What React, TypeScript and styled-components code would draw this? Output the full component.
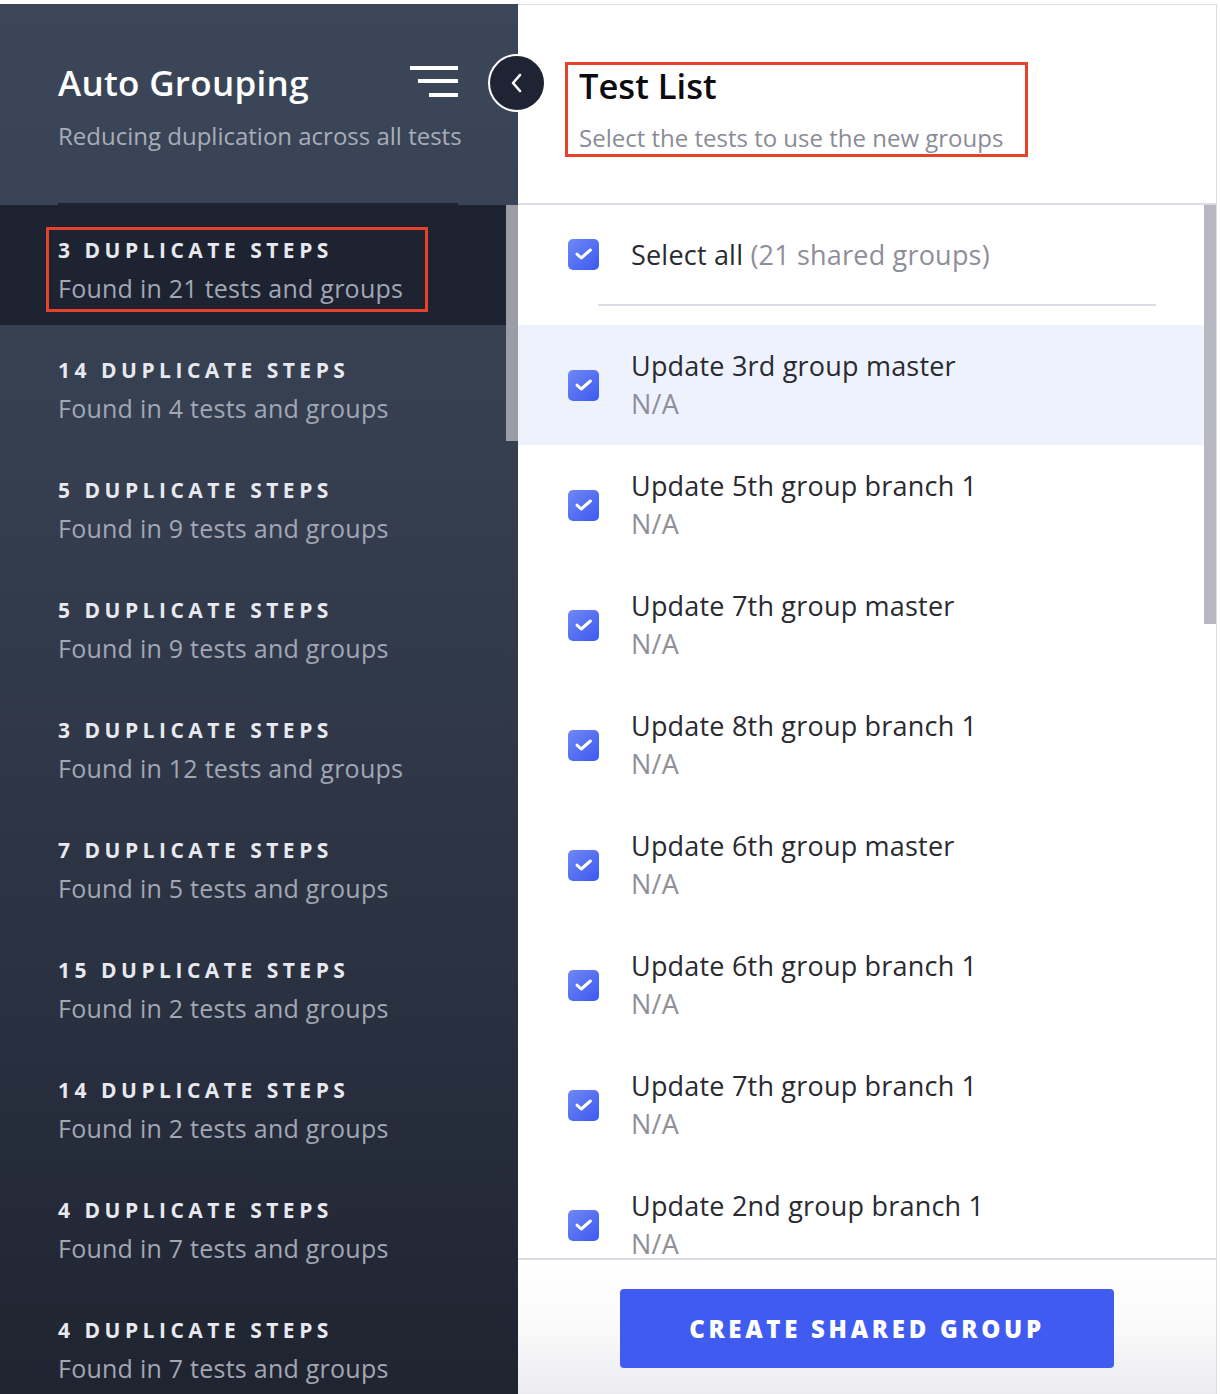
import React from 'react';
import styled, { createGlobalStyle } from 'styled-components';

const GlobalStyle = createGlobalStyle`
  html, body {
    margin: 0;
    padding: 0;
    background: #ffffff;
  }
  body {
    font-family: 'Open Sans', 'Noto Sans', 'Liberation Sans', sans-serif;
    -webkit-font-smoothing: antialiased;
  }
  * {
    box-sizing: border-box;
  }
`;

interface DuplicateGroup {
  steps: number;
  tests: number;
}

interface TestItem {
  name: string;
  detail: string;
}

const groups: DuplicateGroup[] = [
  { steps: 3, tests: 21 },
  { steps: 14, tests: 4 },
  { steps: 5, tests: 9 },
  { steps: 5, tests: 9 },
  { steps: 3, tests: 12 },
  { steps: 7, tests: 5 },
  { steps: 15, tests: 2 },
  { steps: 14, tests: 2 },
  { steps: 4, tests: 7 },
  { steps: 4, tests: 7 },
];

const tests: TestItem[] = [
  'Update 3rd group master',
  'Update 5th group branch 1',
  'Update 7th group master',
  'Update 8th group branch 1',
  'Update 6th group master',
  'Update 6th group branch 1',
  'Update 7th group branch 1',
  'Update 2nd group branch 1',
  'Update 1st group master',
].map((name) => ({ name, detail: 'N/A' }));

const Frame = styled.div`
  position: relative;
  display: flex;
  height: 1394px;
  padding-top: 4px;
  padding-right: 3px;
  background: #ffffff;
  overflow: hidden;
`;

const Sidebar = styled.aside`
  width: 518px;
  flex-shrink: 0;
  display: flex;
  flex-direction: column;
  min-height: 0;
  background: linear-gradient(180deg, #3b4759 0%, #343e4f 35%, #2a3141 70%, #1f2430 100%);
`;

const SidebarHeader = styled.header`
  height: 201px;
  flex-shrink: 0;
  padding: 0 60px 0 58px;
  display: flex;
`;

const SidebarHeaderInner = styled.div`
  flex: 1;
  min-width: 0;
  padding-top: 59px;
  border-bottom: 2px solid #1e2433;
`;

const TitleRow = styled.div`
  display: flex;
  align-items: flex-start;
  justify-content: space-between;
`;

const SidebarTitle = styled.h1`
  margin: 0;
  font-size: 35px;
  line-height: 40px;
  font-weight: 600;
  letter-spacing: 0.3px;
  color: #ffffff;
`;

const SidebarSubtitle = styled.p`
  margin: 18px 0 0;
  font-size: 24px;
  line-height: 30px;
  color: #a8adb9;
  white-space: nowrap;
`;

const MenuIcon = styled.svg`
  margin-top: 3px;
  flex-shrink: 0;
`;

const Viewport = styled.div`
  position: relative;
  flex: 1;
  min-height: 0;
`;

const Scroller = styled.div`
  height: 100%;
  margin-right: 12px;
  overflow-y: auto;
  scrollbar-width: none;

  &::-webkit-scrollbar {
    display: none;
  }
`;

const Thumb = styled.div<{ $tone: string }>`
  position: absolute;
  top: 0;
  right: 0;
  width: 12px;
  background: ${(p) => p.$tone};
`;

const GroupRow = styled.div<{ $active: boolean }>`
  height: 120px;
  padding-top: 22px;
  background: ${(p) => (p.$active ? '#1d2331' : 'transparent')};
`;

const GroupBox = styled.div<{ $active: boolean }>`
  width: 382px;
  margin-left: 46px;
  padding: 1px 9px 2px;
  border: 3px solid ${(p) => (p.$active ? '#e5412b' : 'transparent')};
`;

const GroupTitle = styled.div`
  font-size: 21px;
  line-height: 38px;
  font-weight: 700;
  letter-spacing: 4.5px;
  color: #e7e9ef;
  white-space: nowrap;
`;

const GroupMeta = styled.div`
  font-size: 25px;
  line-height: 38px;
  letter-spacing: 0.25px;
  color: #a2a7b4;
  white-space: nowrap;
`;

const CollapseButton = styled.button`
  position: absolute;
  left: 488px;
  top: 54px;
  width: 58px;
  height: 58px;
  border-radius: 50%;
  border: 2px solid #ffffff;
  background: #1e2433;
  padding: 0;
  display: flex;
  align-items: center;
  justify-content: center;
  cursor: pointer;
`;

const Main = styled.main`
  flex: 1;
  min-width: 0;
  display: flex;
  flex-direction: column;
  border-top: 1px solid #dcdce6;
  border-right: 1px solid #dcdce6;
`;

const MainHeader = styled.header`
  height: 200px;
  flex-shrink: 0;
  padding: 57px 0 0 47px;
  border-bottom: 2px solid #dcdce6;
`;

const HeaderBox = styled.div`
  width: 463px;
  height: 95px;
  border: 3px solid #e5412b;
  padding: 0 11px;
`;

const MainTitle = styled.h2`
  margin: 0;
  font-size: 34.5px;
  line-height: 42px;
  font-weight: 600;
  color: #0c0c10;
`;

const MainSubtitle = styled.p`
  margin: 16px 0 0;
  font-size: 24px;
  line-height: 30px;
  color: #8b8b97;
  white-space: nowrap;
`;

const SelectAllRow = styled.label`
  display: flex;
  align-items: center;
  gap: 32px;
  height: 99px;
  padding-left: 50px;
`;

const Divider = styled.div`
  height: 2px;
  margin: 0 48px 19px 80px;
  background: #dcdce6;
`;

const RowText = styled.span`
  font-size: 27px;
  line-height: 38px;
  letter-spacing: 0.2px;
  color: #2a2a31;
  white-space: nowrap;
`;

const Muted = styled.span`
  color: #8e8e9a;
`;

const TestRow = styled.div<{ $highlight: boolean }>`
  display: flex;
  align-items: center;
  gap: 32px;
  height: 120px;
  padding-left: 50px;
  background: ${(p) => (p.$highlight ? '#eef2fd' : 'transparent')};
`;

const TestText = styled.div`
  display: flex;
  flex-direction: column;
`;

const TestDetail = styled.span`
  font-size: 27px;
  line-height: 38px;
  letter-spacing: 0.2px;
  color: #8e8e9a;
`;

const Box = styled.span`
  width: 31px;
  height: 31px;
  flex-shrink: 0;
  border-radius: 5px;
  background: linear-gradient(135deg, #7088f6 0%, #3c59f0 100%);
  display: flex;
  align-items: center;
  justify-content: center;
`;

const Footer = styled.footer`
  height: 136px;
  flex-shrink: 0;
  border-top: 2px solid #dcdce6;
  padding-top: 29px;
  display: flex;
  justify-content: center;
  align-items: flex-start;
  background: linear-gradient(180deg, #ffffff 0%, #fafafb 50%, #ececef 100%);
`;

const PrimaryButton = styled.button`
  width: 494px;
  height: 79px;
  border: none;
  border-radius: 4px;
  background: #405cf0;
  color: #ffffff;
  font-family: 'Open Sans', 'Noto Sans', 'Liberation Sans', sans-serif;
  font-size: 24px;
  font-weight: 800;
  letter-spacing: 3.7px;
  cursor: pointer;
`;

const Checkbox = () => (
  <Box>
    <svg width="31" height="31" viewBox="0 0 31 31">
      <path d="M9 15.2 L13.2 19 L22.4 11" fill="none" stroke="#ffffff" strokeWidth="3" strokeLinecap="round" strokeLinejoin="round" />
    </svg>
  </Box>
);

const App = () => {
  return (
    <>
      <GlobalStyle />
      <Frame>
        <Sidebar>
          <SidebarHeader>
            <SidebarHeaderInner>
              <TitleRow>
                <SidebarTitle>Auto Grouping</SidebarTitle>
                <MenuIcon width="48" height="31" viewBox="0 0 48 31">
                  <rect x="0" y="0" width="48" height="4" fill="#ffffff" />
                  <rect x="8" y="13" width="40" height="4" fill="#ffffff" />
                  <rect x="19" y="27" width="29" height="4" fill="#ffffff" />
                </MenuIcon>
              </TitleRow>
              <SidebarSubtitle>Reducing duplication across all tests</SidebarSubtitle>
            </SidebarHeaderInner>
          </SidebarHeader>
          <Viewport>
            <Scroller>
              {groups.map((g, i) => (
                <GroupRow key={i} $active={i === 0}>
                  <GroupBox $active={i === 0}>
                    <GroupTitle>{g.steps} DUPLICATE STEPS</GroupTitle>
                    <GroupMeta>Found in {g.tests} tests and groups</GroupMeta>
                  </GroupBox>
                </GroupRow>
              ))}
            </Scroller>
            <Thumb $tone="#9c9ca6" style={{ height: 236 }} />
          </Viewport>
        </Sidebar>

        <CollapseButton aria-label="Collapse">
          <svg width="20" height="26" viewBox="0 0 20 26">
            <path d="M13 5 L6 13 L13 21" fill="none" stroke="#ffffff" strokeWidth="2.6" strokeLinecap="round" strokeLinejoin="round" />
          </svg>
        </CollapseButton>

        <Main>
          <MainHeader>
            <HeaderBox>
              <MainTitle>Test List</MainTitle>
              <MainSubtitle>Select the tests to use the new groups</MainSubtitle>
            </HeaderBox>
          </MainHeader>
          <Viewport>
            <Scroller>
              <SelectAllRow>
                <Checkbox />
                <RowText>
                  Select all <Muted>(21 shared groups)</Muted>
                </RowText>
              </SelectAllRow>
              <Divider />
              {tests.map((t, i) => (
                <TestRow key={t.name} $highlight={i === 0}>
                  <Checkbox />
                  <TestText>
                    <RowText>{t.name}</RowText>
                    <TestDetail>{t.detail}</TestDetail>
                  </TestText>
                </TestRow>
              ))}
            </Scroller>
            <Thumb $tone="#b8b8c2" style={{ height: 419 }} />
          </Viewport>
          <Footer>
            <PrimaryButton>CREATE SHARED GROUP</PrimaryButton>
          </Footer>
        </Main>
      </Frame>
    </>
  );
};

export default App;
